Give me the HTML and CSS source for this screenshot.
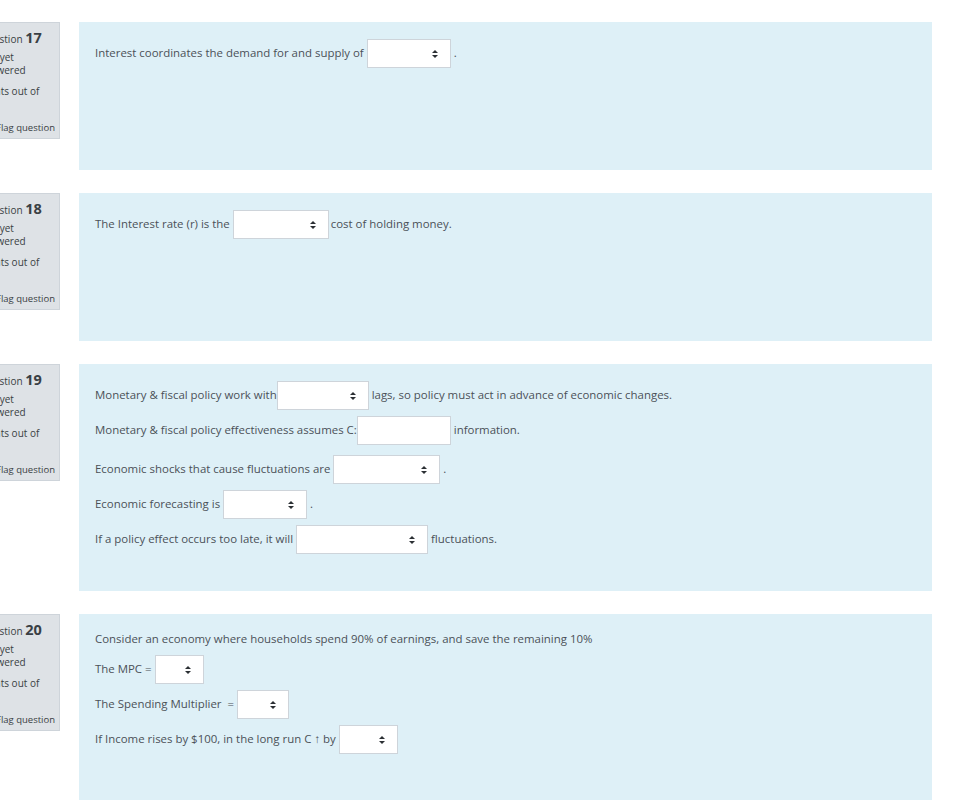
FILE: index.html
```html
<!DOCTYPE html>
<html lang="en">
  <head>
    <meta charset="UTF-8" />
    <meta name="viewport" content="width=device-width, initial-scale=1.0" />
    <title>Quiz</title>
    <link rel="stylesheet" href="styles.css">
  </head>
  <body>
    <div class="quiz">
      <!-- Question 17 -->
      <div class="que">
        <div class="info">
          <h3 class="no">Question <span class="qno">17</span></h3>
          <div class="state">Not yet answered</div>
          <div class="grade">Points out of 1.00</div>
          <div class="flag">
            <svg width="10" height="11" viewBox="0 0 10 11"><path d="M1.5 1v9M1.5 1.5h6l-1.5 2.2 1.5 2.2h-6" fill="none" stroke="#555" stroke-width="1"/></svg>Flag question
          </div>
        </div>
        <div class="formulation">
          <div class="row">Interest coordinates the demand for and supply of <span class="select w84"></span> .</div>
        </div>
      </div>

      <!-- Question 18 -->
      <div class="que">
        <div class="info">
          <h3 class="no">Question <span class="qno">18</span></h3>
          <div class="state">Not yet answered</div>
          <div class="grade">Points out of 1.00</div>
          <div class="flag">
            <svg width="10" height="11" viewBox="0 0 10 11"><path d="M1.5 1v9M1.5 1.5h6l-1.5 2.2 1.5 2.2h-6" fill="none" stroke="#555" stroke-width="1"/></svg>Flag question
          </div>
        </div>
        <div class="formulation">
          <div class="row">The Interest rate (r) is the <span class="select w96"></span><span class="after">cost of holding money.</span></div>
        </div>
      </div>

      <!-- Question 19 -->
      <div class="que">
        <div class="info">
          <h3 class="no">Question <span class="qno">19</span></h3>
          <div class="state">Not yet answered</div>
          <div class="grade">Points out of 1.00</div>
          <div class="flag">
            <svg width="10" height="11" viewBox="0 0 10 11"><path d="M1.5 1v9M1.5 1.5h6l-1.5 2.2 1.5 2.2h-6" fill="none" stroke="#555" stroke-width="1"/></svg>Flag question
          </div>
        </div>
        <div class="formulation tall">
          <div class="row">Monetary &amp; fiscal policy work with<span class="select w92"></span> lags, so policy must act in advance of economic changes.</div>
          <div class="row gap">Monetary &amp; fiscal policy effectiveness assumes C:<span class="input w94"></span> information.</div>
          <div class="row">Economic shocks that cause fluctuations are <span class="select w107"></span> .</div>
          <div class="row">Economic forecasting is <span class="select w84"></span> .</div>
          <div class="row">If a policy effect occurs too late, it will <span class="select w132"></span> fluctuations.</div>
        </div>
      </div>

      <!-- Question 20 -->
      <div class="que">
        <div class="info">
          <h3 class="no">Question <span class="qno">20</span></h3>
          <div class="state">Not yet answered</div>
          <div class="grade">Points out of 1.00</div>
          <div class="flag">
            <svg width="10" height="11" viewBox="0 0 10 11"><path d="M1.5 1v9M1.5 1.5h6l-1.5 2.2 1.5 2.2h-6" fill="none" stroke="#555" stroke-width="1"/></svg>Flag question
          </div>
        </div>
        <div class="formulation tall">
          <div class="row lead">Consider an economy where households spend 90% of earnings, and save the remaining 10%</div>
          <div class="row">The MPC = <span class="select w49"></span></div>
          <div class="row">The Spending Multiplier &nbsp;= <span class="select w52"></span></div>
          <div class="row">If Income rises by $100, in the long run C &uarr; by <span class="select w59"></span></div>
        </div>
      </div>
    </div>
  </body>
</html>
```

FILE: styles.css
```css
* {
  margin: 0;
  padding: 0;
  box-sizing: border-box;
}

body {
  font-family: "Open Sans", "Segoe UI", sans-serif;
  font-size: 11.45px;
  color: #4b5157;
  background: #fff;
  overflow: hidden;
}

.quiz {
  margin-left: -27px;
  padding: 22px 35px 0 0;
}

.que {
  display: flex;
  align-items: flex-start;
  gap: 19px;
  margin-bottom: 23px;
}

/* left info block */
.info {
  flex-shrink: 0;
  width: 87px;
  height: 117px;
  padding: 6px 4px 0 6px;
  background: #dee2e6;
  border: 1px solid #ced4da;
  color: #3a3f44;
  font-size: 10px;
  line-height: 13px;
}

.info .no {
  font-weight: normal;
  font-size: 10px;
  line-height: 18px;
  margin-bottom: 3px;
}

.info .qno {
  font-weight: bold;
  font-size: 14.5px;
}

.info .state {
  margin-bottom: 8px;
}

.info .grade {
  margin-bottom: 10px;
}

.info .flag {
  font-size: 9.5px;
  white-space: nowrap;
}

.info .flag svg {
  vertical-align: -1px;
  margin-right: 6px;
}

/* question body */
.formulation {
  flex: 1;
  min-height: 148px;
  padding: 16px 16px 20px 16px;
  background: #def0f7;
}

.formulation.tall {
  min-height: 227px;
}

.row {
  height: 29px;
  line-height: 29px;
  margin-bottom: 6px;
  white-space: nowrap;
}

.row.gap {
  margin-bottom: 10px;
}

.row.lead {
  height: 18px;
  line-height: 18px;
}

.select,
.input {
  position: relative;
  display: inline-block;
  height: 29px;
  vertical-align: middle;
  background: #fff;
  border: 1px solid #ced4da;
}

/* up / down arrows of the select */
.select::before,
.select::after {
  content: "";
  position: absolute;
  right: 12px;
  border-left: 3px solid transparent;
  border-right: 3px solid transparent;
}

.select::before {
  top: 10px;
  border-bottom: 3px solid #2b2f33;
}

.select::after {
  top: 15px;
  border-top: 3px solid #2b2f33;
}

.after {
  margin-left: 2px;
}

.w49 { width: 49px; }
.w52 { width: 52px; }
.w59 { width: 59px; }
.w84 { width: 84px; }
.w92 { width: 92px; }
.w94 { width: 94px; }
.w96 { width: 96px; }
.w107 { width: 107px; }
.w132 { width: 132px; }
```
